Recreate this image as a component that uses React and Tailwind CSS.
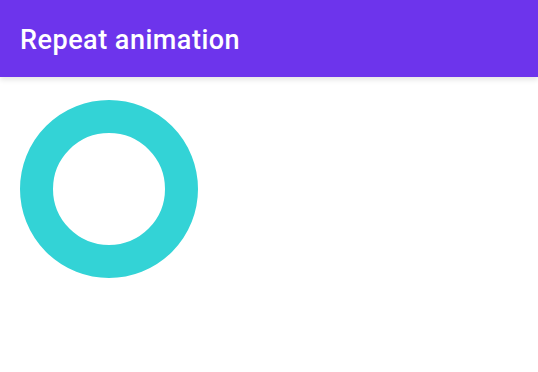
export default function App() {
  return (
    <div className="w-[538px] h-[372px] bg-white overflow-hidden" style={{ fontFamily: "Roboto, sans-serif" }}>
      <div className="h-[77px] bg-[#6d34ec] flex items-center pl-5 shadow-[0_3px_5px_rgba(0,0,0,0.1)] relative">
        <span className="text-white text-[27px] font-medium leading-none tracking-[0.5px] pt-[3px]">Repeat animation</span>
      </div>
      <div className="pt-[23px] pl-5">
        <div className="w-[178px] h-[178px] rounded-full border-[33px] border-[#33d3d6]" />
      </div>
    </div>
  );
}
